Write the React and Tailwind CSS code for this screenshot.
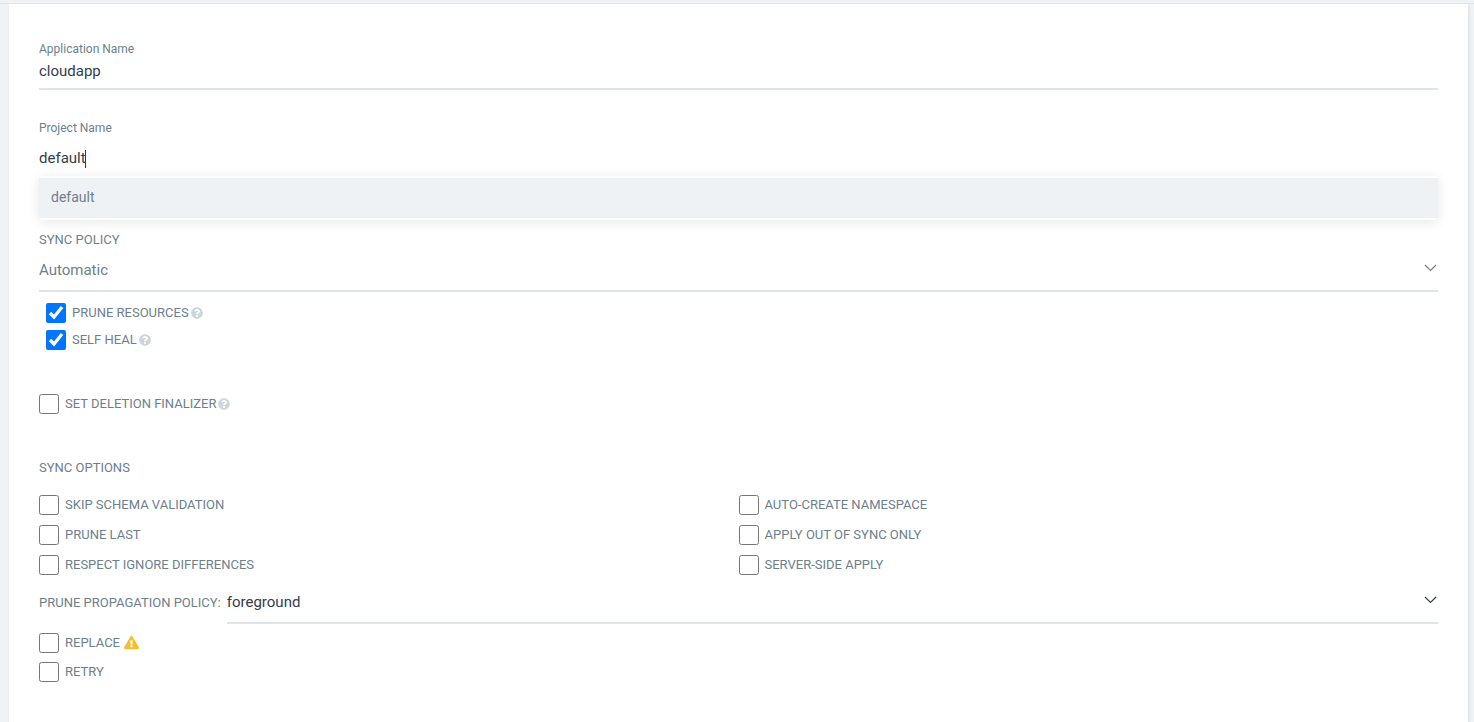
import { useState } from "react";
import { FaExclamationTriangle, FaQuestionCircle } from "react-icons/fa";

const syncOptions = [
    { id: "validate", label: "Skip schema validation" },
    { id: "create-namespace", label: "Auto-create namespace" },
    { id: "prune-last", label: "Prune last" },
    { id: "out-of-sync", label: "Apply out of sync only" },
    { id: "ignore-differences", label: "Respect ignore differences" },
    { id: "server-side", label: "Server-side apply" },
];

function Checkbox({ id, label, defaultChecked = false, children }) {
    return (
        <div className="flex h-5 items-center">
            <input id={id} type="checkbox" defaultChecked={defaultChecked} className="size-5 shrink-0" />
            <label htmlFor={id} className="ml-1.5 text-[13px] leading-5 uppercase">
                {label}
            </label>
            {children}
        </div>
    );
}

function Help({ title }) {
    return (
        <span title={title} className="ml-0.5 pb-px text-xs text-[#ccd6dd]">
            <FaQuestionCircle />
        </span>
    );
}

function Select({ id, options, className }) {
    return (
        <div className={`relative ${className}`}>
            <select
                id={id}
                className="block h-10 w-full appearance-none rounded-none border-b-2 border-[#dee4e9] bg-transparent pb-0.5 text-[15px] outline-none"
            >
                {options.map((option) => (
                    <option key={option}>{option}</option>
                ))}
            </select>
            <svg
                viewBox="0 0 14 8"
                className="pointer-events-none absolute top-3 right-0 h-2 w-3.5"
                fill="none"
                stroke="currentColor"
                strokeWidth="1.2"
            >
                <path d="M1 1 6.5 6.5 12 1" />
            </svg>
        </div>
    );
}

function ProjectField() {
    const [project, setProject] = useState("default");

    return (
        <div className="mt-[29px]">
            <label htmlFor="project" className="block text-xs leading-[18px]">
                Project Name
            </label>
            <div className="relative">
                <input
                    id="project"
                    value={project}
                    onChange={(e) => setProject(e.target.value)}
                    className="block h-[39px] w-full pt-0.5 text-[15px] text-[#363c4a] caret-transparent outline-none"
                />
                <span className="absolute top-[13px] left-[46px] h-[18px] w-px bg-[#363c4a]" />
                <ul className="absolute top-full left-0 z-10 w-full rounded-sm bg-white py-0.5 shadow-[0_2px_12px_rgba(0,0,0,0.1)]">
                    <li>
                        <button
                            type="button"
                            onClick={() => setProject("default")}
                            className="block h-10 w-full bg-[#eef2f5] px-3 pb-0.5 text-left text-sm"
                        >
                            default
                        </button>
                    </li>
                </ul>
            </div>
        </div>
    );
}

export default function App() {
    return (
        <div className="flex min-h-screen flex-col bg-[#eff3f6] font-['Roboto',sans-serif] text-[#6d7f8b]">
            <div className="h-1 border-b border-[#dee4e9]" />

            <form className="mr-1.5 ml-[9px] flex-1 bg-white px-[30px] pt-9 pb-10 shadow-[1px_2px_3px_rgba(0,0,0,0.1)]">
                <div>
                    <label htmlFor="name" className="block text-xs leading-[18px]">
                        Application Name
                    </label>
                    <input
                        id="name"
                        defaultValue="cloudapp"
                        className="block h-8 w-full border-b-2 border-[#dee4e9] pb-1 text-[15px] text-[#363c4a] outline-none"
                    />
                </div>

                <ProjectField />

                <div className="mt-[54px]">
                    <label htmlFor="policy" className="block text-[13px] leading-5 uppercase">
                        Sync Policy
                    </label>
                    <Select id="policy" options={["Automatic", "Manual"]} className="mt-0.5" />
                </div>

                <div className="mt-[11px] ml-[7px] space-y-[7px]">
                    <Checkbox id="prune" label="Prune resources" defaultChecked>
                        <Help title="Delete resources that are no longer defined in Git" />
                    </Checkbox>
                    <Checkbox id="self-heal" label="Self heal" defaultChecked>
                        <Help title="Sync again when the live state changes" />
                    </Checkbox>
                </div>

                <div className="mt-11">
                    <Checkbox id="finalizer" label="Set deletion finalizer">
                        <Help title="Delete the application's resources along with it" />
                    </Checkbox>
                </div>

                <fieldset className="mt-11">
                    <legend className="text-[13px] leading-5 uppercase">Sync Options</legend>
                    <div className="mt-[17px] grid grid-cols-2 gap-y-2.5">
                        {syncOptions.map((option) => (
                            <Checkbox key={option.id} id={option.id} label={option.label} />
                        ))}
                    </div>

                    <div className="mt-[9px] flex items-start">
                        <label htmlFor="propagation" className="mt-[9px] text-[13px] leading-5 uppercase">
                            Prune propagation policy:
                        </label>
                        <Select
                            id="propagation"
                            options={["foreground", "background", "orphan"]}
                            className="ml-1.5 flex-1 text-[#363c4a]"
                        />
                    </div>

                    <div className="mt-[9px] space-y-[9px]">
                        <Checkbox id="replace" label="Replace">
                            <FaExclamationTriangle className="mb-0.5 ml-1 text-[15px] text-[#f4c030]" />
                        </Checkbox>
                        <Checkbox id="retry" label="Retry" />
                    </div>
                </fieldset>
            </form>
        </div>
    );
}
